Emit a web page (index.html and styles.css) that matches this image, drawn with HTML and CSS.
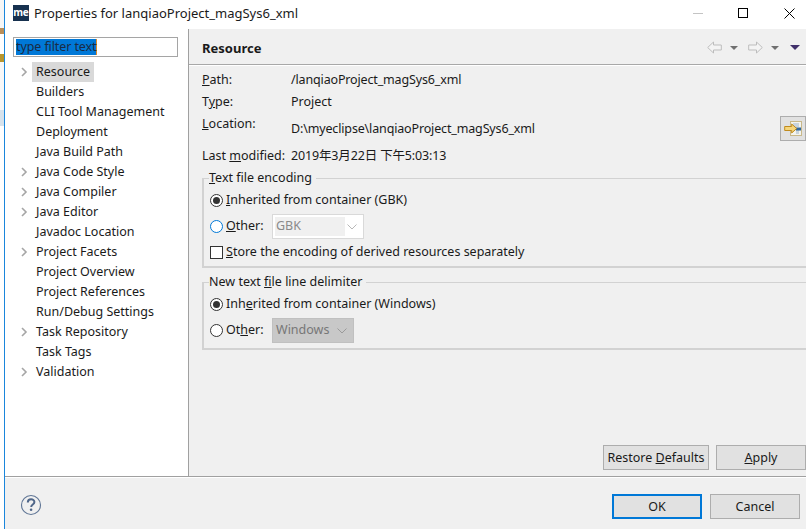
FILE: index.html
```html
<!DOCTYPE html>
<html lang="en">
<head>
<meta charset="utf-8">
<title>Properties</title>
<link rel="stylesheet" href="styles.css">
</head>
<body>
<div class="screen">
  <div class="desk"></div>
  <div class="window">
    <header class="titlebar">
      <span class="logo">me</span>
      <span class="title">Properties for lanqiaoProject_magSys6_xml</span>
      <div class="winctl">
        <svg class="ctl-min" width="10" height="1" viewBox="0 0 10 1"><rect width="10" height="1" fill="#c4c4c4"/></svg>
        <svg class="ctl-max" width="10" height="10" viewBox="0 0 10 10"><rect x=".5" y=".5" width="9" height="9" fill="none" stroke="#000"/></svg>
        <svg class="ctl-close" width="11" height="11" viewBox="0 0 11 11"><path d="M.5.5l10 10M10.5.5l-10 10" stroke="#000" fill="none"/></svg>
      </div>
    </header>
    <div class="main">
      <aside class="side">
        <div class="filter"><span class="filter-text">type filter text</span></div>
        <ul class="tree">
          <li class="node sel"><svg class="chev" viewBox="0 0 7 10"><path d="M1 1l4 4-4 4" fill="none" stroke="#a6a6a6" stroke-width="1.6"/></svg><span>Resource</span></li>
          <li class="node"><span>Builders</span></li>
          <li class="node"><span>CLI Tool Management</span></li>
          <li class="node"><span>Deployment</span></li>
          <li class="node"><span>Java Build Path</span></li>
          <li class="node"><svg class="chev" viewBox="0 0 7 10"><path d="M1 1l4 4-4 4" fill="none" stroke="#a6a6a6" stroke-width="1.6"/></svg><span>Java Code Style</span></li>
          <li class="node"><svg class="chev" viewBox="0 0 7 10"><path d="M1 1l4 4-4 4" fill="none" stroke="#a6a6a6" stroke-width="1.6"/></svg><span>Java Compiler</span></li>
          <li class="node"><svg class="chev" viewBox="0 0 7 10"><path d="M1 1l4 4-4 4" fill="none" stroke="#a6a6a6" stroke-width="1.6"/></svg><span>Java Editor</span></li>
          <li class="node"><span>Javadoc Location</span></li>
          <li class="node"><svg class="chev" viewBox="0 0 7 10"><path d="M1 1l4 4-4 4" fill="none" stroke="#a6a6a6" stroke-width="1.6"/></svg><span>Project Facets</span></li>
          <li class="node"><span>Project Overview</span></li>
          <li class="node"><span>Project References</span></li>
          <li class="node"><span>Run/Debug Settings</span></li>
          <li class="node"><svg class="chev" viewBox="0 0 7 10"><path d="M1 1l4 4-4 4" fill="none" stroke="#a6a6a6" stroke-width="1.6"/></svg><span>Task Repository</span></li>
          <li class="node"><span>Task Tags</span></li>
          <li class="node"><svg class="chev" viewBox="0 0 7 10"><path d="M1 1l4 4-4 4" fill="none" stroke="#a6a6a6" stroke-width="1.6"/></svg><span>Validation</span></li>
        </ul>
      </aside>
      <section class="page">
        <div class="page-head">
          <h1 class="page-title">Resource</h1>
          <div class="nav">
            <svg width="15" height="13" viewBox="0 0 15 13"><path d="M.7 6.500L6.500 1v3h7.800v5H6.500v3z" fill="#f4f4f4" stroke="#bdbdbd"/></svg>
            <svg class="drop" width="8" height="4" viewBox="0 0 8 4"><path d="M0 0h8L4 4z" fill="#707070"/></svg>
            <svg class="fwd" width="15" height="13" viewBox="0 0 15 13"><path d="M14.300 6.500L8.500 1v3H.7v5h7.800v3z" fill="#f4f4f4" stroke="#bdbdbd"/></svg>
            <svg class="drop" width="8" height="4" viewBox="0 0 8 4"><path d="M0 0h8L4 4z" fill="#707070"/></svg>
            <svg class="menu" width="10" height="5" viewBox="0 0 10 5"><path d="M0 0h10L5 5z" fill="#40306a"/></svg>
          </div>
        </div>
        <div class="page-body">
          <div class="info">
            <div class="row r-path"><span class="lbl"><u>P</u>ath:</span><span class="val">/lanqiaoProject_magSys6_xml</span></div>
            <div class="row r-type"><span class="lbl">T<u>y</u>pe:</span><span>Project</span></div>
            <div class="row r-loc"><span class="lbl loc-lbl"><u>L</u>ocation:</span><span class="val loc-val">D:\myeclipse\lanqiaoProject_magSys6_xml</span>
              <button class="reveal" type="button" aria-label="Show in explorer">
                <svg width="18" height="16" viewBox="0 0 18 16">
                  <rect x="6.500" y=".5" width="11" height="14" fill="#f4f4ee" stroke="#c8b88a"/>
                  <path d="M9 3h6M9 5h6M12 10h3M12 12h3" stroke="#9db4cc"/>
                  <rect x="12" y="6.500" width="5" height="3" fill="#33689c"/>
                  <path d="M.7 5.500h7V3l5 4.500-5 4.500V9.500h-7z" fill="#f6d67a" stroke="#bf8a1e"/>
                </svg>
              </button>
            </div>
            <div class="row r-mod"><span class="lbl">Last <u>m</u>odified:</span><span class="val">2019年3月22日 下午5:03:13</span></div>
          </div>
          <fieldset class="group g-enc">
            <legend><u>T</u>ext file encoding</legend>
            <div class="opt"><span class="radio on"></span><span><u>I</u>nherited from container (GBK)</span></div>
            <div class="opt opt-sel"><span class="radio focus"></span><span class="opt-lbl"><u>O</u>ther:</span>
              <div class="combo combo-light"><span class="combo-text">GBK</span><svg class="caret" width="10" height="6" viewBox="0 0 10 6"><path d="M.5.500L5 5 9.500.5" fill="none" stroke="#b8b8b8"/></svg></div>
            </div>
            <div class="opt"><span class="check"></span><span><u>S</u>tore the encoding of derived resources separately</span></div>
          </fieldset>
          <fieldset class="group g-delim">
            <legend>New text <u>f</u>ile line delimiter</legend>
            <div class="opt"><span class="radio on"></span><span>Inh<u>e</u>rited from container (Windows)</span></div>
            <div class="opt opt-sel"><span class="radio"></span><span class="opt-lbl">Ot<u>h</u>er:</span>
              <div class="combo combo-dark"><span>Windows</span><svg class="caret" width="10" height="6" viewBox="0 0 10 6"><path d="M.5.500L5 5 9.500.5" fill="none" stroke="#9a9a9a"/></svg></div>
            </div>
          </fieldset>
          <div class="page-actions">
            <button class="btn btn-restore" type="button">Restore <u>D</u>efaults</button>
            <button class="btn btn-apply" type="button"><u>A</u>pply</button>
          </div>
        </div>
      </section>
    </div>
    <footer class="footer">
      <svg class="help" width="22" height="22" viewBox="0 0 22 22"><circle cx="11" cy="11" r="9.500" fill="none" stroke="#5f7595" stroke-width="1.100"/><path d="M7.800 8.500c0-4.200 6.600-4.200 6.600-.4 0 2.500-3.200 2.300-3.200 4.900" fill="none" stroke="#4f6689" stroke-width="2"/><circle cx="11.100" cy="15.800" r="1.300" fill="#4f6689"/></svg>
      <div class="foot-actions">
        <button class="btn btn-ok" type="button">OK</button>
        <button class="btn btn-cancel" type="button">Cancel</button>
      </div>
    </footer>
  </div>
</div>
</body>
</html>
```
FILE: styles.css
```css
* { box-sizing: border-box; }
html, body { margin: 0; padding: 0; height: 100%; overflow: hidden; }
body { font: 12.5px/18px "Noto Sans", "Noto Sans CJK SC", sans-serif; color: #1a1a1a; background: #f0f0f0; }
.screen { display: flex; width: 806px; height: 529px; overflow: hidden; }
.desk {
  width: 4px; flex: none;
  background: linear-gradient(#f6f6f6 0 28px, #b98f5a 28px 34px, #fff 34px 54px, #b8962e 54px 62px, #f8f8f8 62px 110px, #d6e2ec 110px 126px, #fff 126px);
}
.window { flex: 1; min-width: 0; display: flex; flex-direction: column; border-left: 1px solid #1a86dc; }

.titlebar { height: 29px; flex: none; background: #fff; display: flex; align-items: center; padding-left: 8px; position: relative; }
.logo { width: 16px; height: 16px; background: #17314f; color: #fff; font-weight: 700; font-size: 10px; line-height: 15px; text-align: center; margin-top: -3px; }
.title { margin-left: 5px; margin-top: -3px; font-size: 13px; }
.winctl { margin-left: auto; display: flex; align-items: center; margin-top: -3px; }
.ctl-min { margin-right: 35px; }
.ctl-max { margin-right: 36px; }
.ctl-close { margin-right: 11px; }

.main { flex: 1; min-height: 0; display: flex; }
.side { width: 184px; flex: none; background: #fff; border-right: 1px solid #a0a0a0; padding: 8px 0 0 8px; }
.filter { width: 165px; height: 20px; border: 1px solid #a5a5a5; padding: 1px 2px; background: #fff; line-height: 16px; letter-spacing: -.1px; }
.filter-text { background: #0078d7; color: #1a2b44; display: inline-block; height: 16px; border-right: 1px solid #e08a2a; }
.tree { list-style: none; margin: 5px 0 0; padding: 0; }
.node { height: 20px; line-height: 19px; padding-left: 23px; position: relative; }
.node span { display: inline-block; padding: 0 4px 0 0; height: 20px; }
.sel span { background: #d9d9d9; padding: 0 4px; margin-left: -4px; width: 62px; }
.chev { position: absolute; left: 8px; top: 5px; width: 7px; height: 10px; }

.page { flex: 1; min-width: 0; display: flex; flex-direction: column; }
.page-head { height: 36px; flex: none; border-bottom: 1px solid #a8a8a8; box-shadow: 0 1px 0 #fff; display: flex; align-items: center; padding: 2px 6px 0 13px; }
.page-title { margin: 0; font-size: 13px; font-weight: 700; line-height: 18px; }
.nav { margin-left: auto; display: flex; align-items: center; }
.nav .drop { margin-left: 8px; }
.nav .fwd { margin-left: 10px; }
.nav .menu { margin-left: 11px; }

.page-body { flex: 1; min-height: 0; display: flex; flex-direction: column; padding: 4px 0 0 13px; position: relative; }
.row { display: flex; height: 22px; align-items: center; }
.lbl { width: 89px; flex: none; }
.val { letter-spacing: -.15px; }
.r-loc { height: 32px; align-items: flex-start; }
.loc-lbl { margin-top: 2px; }
.loc-val { margin-top: 7px; }
.reveal { margin-left: auto; width: 26px; height: 25px; border: 1px solid #adadad; background: #e1e1e1; padding: 0; display: flex; align-items: center; justify-content: center; margin-top: 3px; flex: none; }

.group { margin: 0 -10px 0 0; padding: 0 0 0 6px; border: 2px solid #d2d2d2; border-top-width: 1px; position: relative; }
.group legend { padding: 0 4px 0 0; margin-left: -1px; line-height: 18px; height: 18px; }
.g-enc { height: 99px; margin-top: 2px; }
.g-delim { height: 77px; margin-top: 5px; }
.opt { display: flex; align-items: center; height: 26px; }
.radio { width: 13px; height: 13px; border: 1px solid #333; border-radius: 50%; background: #fff; flex: none; margin-right: 3px; position: relative; }
.radio.focus { border-color: #0078d7; }
.radio.on::after { content: ""; position: absolute; inset: 2px; border-radius: 50%; background: #333; }
.check { width: 13px; height: 13px; border: 1px solid #333; background: #fff; flex: none; margin-right: 3px; }
.opt-lbl { width: 46px; flex: none; }
.combo { height: 25px; display: flex; align-items: center; position: relative; padding-left: 3px; }
.combo-light { width: 92px; background: #fff; border: 1px solid #d9d9d9; padding: 2px; color: #8a8a8a; }
.combo-text { width: 70px; height: 19px; background: #f0f0f0; padding-left: 1px; line-height: 17px; }
.combo-dark { width: 82px; background: #c8c8c8; color: #777; border: 1px solid #c0c0c0; }
.caret { position: absolute; right: 6px; top: 9px; }

.page-actions { margin-top: auto; display: flex; gap: 7px; justify-content: flex-end; padding-bottom: 6px; }
.btn { font: inherit; color: inherit; background: #e1e1e1; border: 1px solid #adadad; padding: 0; height: 25px; line-height: 21px; }
.btn-restore { width: 106px; }
.btn-apply { width: 90px; }

.footer { height: 53px; flex: none; border-top: 1px solid #a0a0a0; box-shadow: inset 0 1px 0 #fff; display: flex; align-items: center; padding: 0 6px 0 15px; }
.help { margin-top: 4px; }
.foot-actions { margin-left: auto; display: flex; gap: 8px; margin-top: 7px; }
.btn-ok, .btn-cancel { width: 90px; }
.btn-ok { border: 2px solid #0078d7; }
```
